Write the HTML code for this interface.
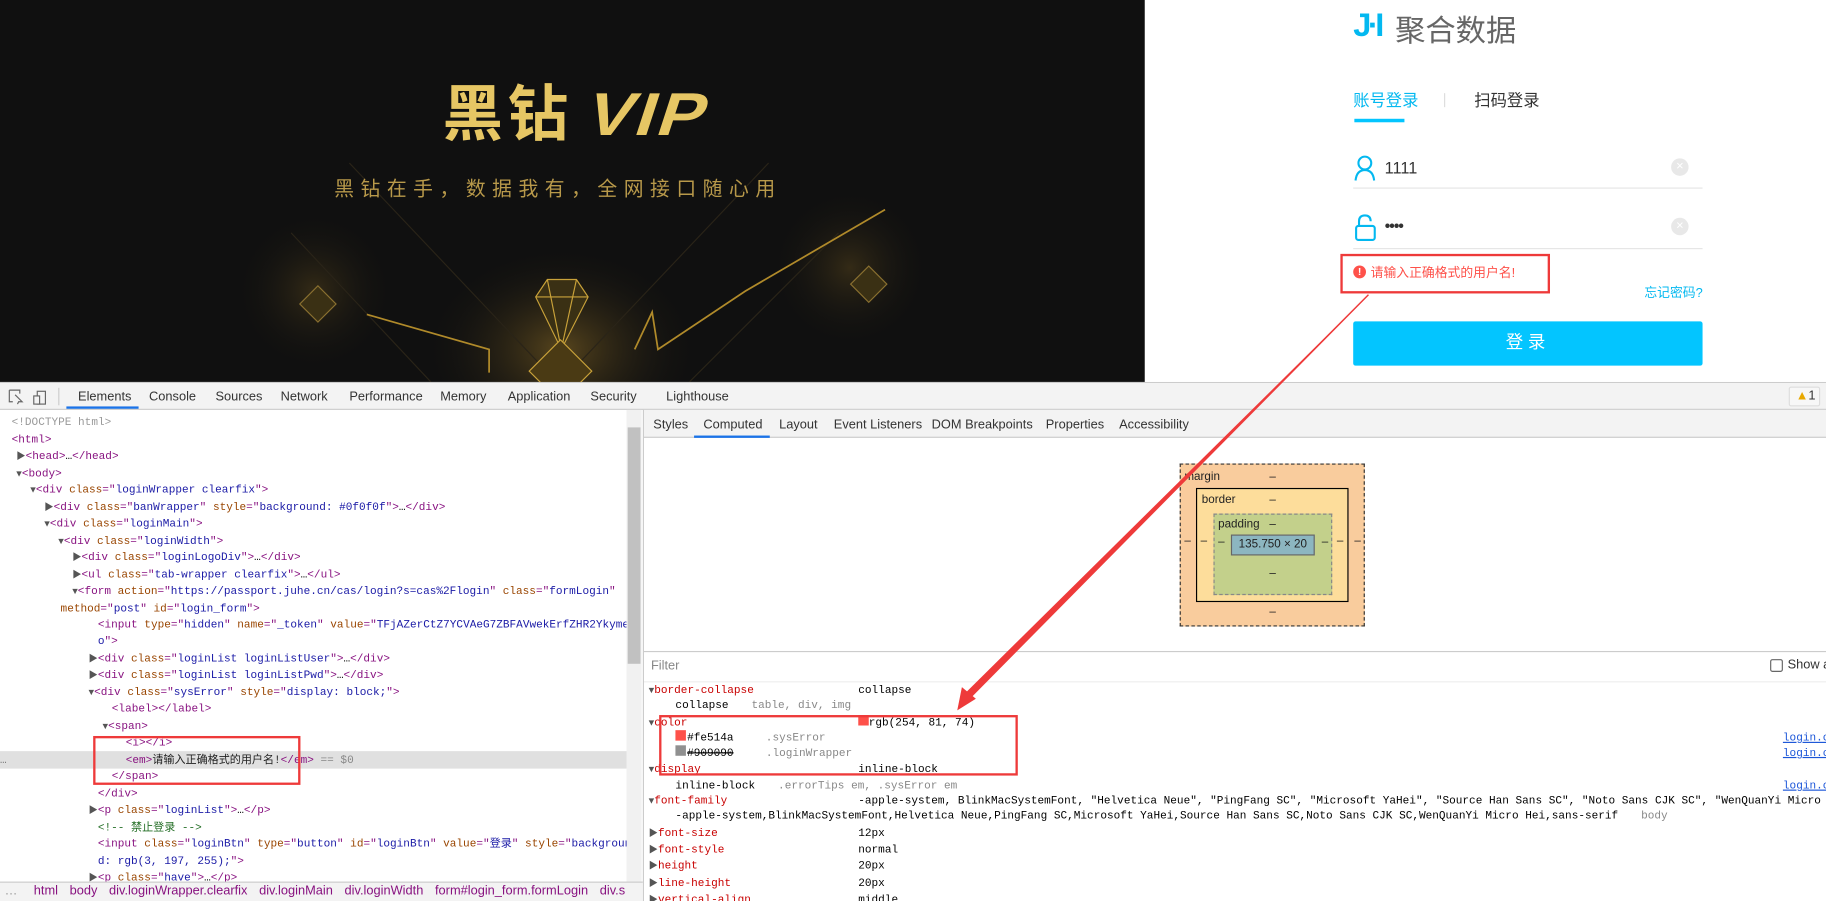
<!DOCTYPE html>
<html><head><meta charset="utf-8">
<style>
*{margin:0;padding:0;box-sizing:border-box}
html,body{width:1826px;height:901px;overflow:hidden;background:#fff}
#w{position:absolute;left:0;top:0;width:1568px;height:774px;overflow:hidden;transform:scale(1.16454);transform-origin:0 0;font-family:"Liberation Sans","Noto Sans CJK SC",sans-serif}
.a{position:absolute;white-space:nowrap}
.m{font-family:"Liberation Mono","Noto Sans CJK SC",monospace;font-size:9.5px;line-height:14px}
.t{color:#881280}.n{color:#994500}.v{color:#1a1aa6}.g{color:#999}.c{color:#236e25}
.tri{color:#555;font-size:8px}
.rp{color:#c80000}
.ui{font-size:11px;color:#333}
#el{position:absolute;left:0;top:352px;width:538px;height:405px;overflow:hidden}
#el .a{margin-top:-352px}
</style></head><body><div id="w">
<!-- banner -->
<div class="a" style="left:0;top:0;width:983px;height:328px;background:#101010;overflow:hidden">
<svg width="983" height="328" style="position:absolute;left:0;top:0">
<defs><radialGradient id="gl" cx="0.5" cy="0.5" r="0.5"><stop offset="0" stop-color="#6a5320" stop-opacity=".8"/><stop offset="1" stop-color="#101010" stop-opacity="0"/></radialGradient></defs>
<ellipse cx="482" cy="300" rx="120" ry="90" fill="url(#gl)"/>
<ellipse cx="270" cy="250" rx="70" ry="70" fill="url(#gl)" opacity=".5"/>
<ellipse cx="730" cy="230" rx="70" ry="70" fill="url(#gl)" opacity=".5"/>
<g stroke="#2a2418" fill="none"><path d="M300 140 L480 330 M660 140 L480 330 M250 200 L400 360 M720 200 L560 360"/></g>
<g stroke="#b08a2a" stroke-width="1.5" fill="none"><path d="M315 270 L420 300 L420 320 M545 300 L560 268 L565 300 L640 250 L760 180"/></g>
<g stroke="#c9a23a" fill="#3a3014" stroke-width="1"><path d="M470 240 L495 240 L505 255 L482 300 L460 255 Z"/><path d="M460 255 L505 255 M470 240 L482 300 M495 240 L482 300"/></g>
<rect x="463" y="300" width="38" height="38" transform="rotate(45 482 318)" fill="#4a3a14" stroke="#c9a23a"/>
<rect x="262" y="250" width="22" height="22" transform="rotate(45 273 261)" fill="#3a3014" stroke="#8a7030"/>
<rect x="735" y="233" width="22" height="22" transform="rotate(45 746 244)" fill="#3a3014" stroke="#8a7030"/>
</svg>
<div class="a" style="left:380px;top:64px;font-size:52px;font-weight:bold;color:#e6c664;letter-spacing:4px;font-family:'Noto Sans CJK SC',sans-serif;line-height:60px">黑钻<span style="display:inline-block;transform:skewX(-18deg) scaleX(1.15);transform-origin:0 100%;font-family:'Liberation Sans',sans-serif;margin-left:4px;letter-spacing:2px">VIP</span></div>
<div class="a" style="left:287px;top:148px;font-size:17px;color:#b8994a;letter-spacing:5.6px">黑钻在手，数据我有，全网接口随心用</div>
</div>
<!-- login -->
<div class="a" style="left:1162px;top:6px;font-size:28px;color:#03b8f0;font-weight:bold;letter-spacing:-3px">J·I</div>
<div class="a" style="left:1198px;top:6px;font-size:26px;color:#666">聚合数据</div>
<div class="a" style="left:1162px;top:76px;font-size:14px;color:#03b8f0">账号登录</div>
<div class="a" style="left:1163px;top:102px;width:43px;height:3px;background:#03c5ff"></div>
<div class="a" style="left:1240px;top:80px;width:1px;height:12px;background:#ddd"></div>
<div class="a" style="left:1266px;top:76px;font-size:14px;color:#333">扫码登录</div>
<svg class="a" style="left:1163px;top:133px" width="20" height="24"><circle cx="9" cy="7" r="5.5" fill="none" stroke="#03b8f0" stroke-width="1.8"/><path d="M1 22 Q2 13 9 13 Q16 13 17 22" fill="none" stroke="#03b8f0" stroke-width="1.8"/></svg>
<div class="a" style="left:1189px;top:136px;font-size:14px;color:#333">1111</div>
<div class="a" style="left:1435px;top:136px;width:15px;height:15px;border-radius:50%;background:#e8e8e8;color:#fff;font-size:11px;text-align:center;line-height:15px">×</div>
<div class="a" style="left:1162px;top:161px;width:300px;height:1px;background:#e5e5e5"></div>
<svg class="a" style="left:1163px;top:183px" width="20" height="26"><path d="M4 11 V7 Q4 2 9 2 Q14 2 14 7" fill="none" stroke="#03b8f0" stroke-width="1.8"/><rect x="1.5" y="11" width="16" height="12" rx="2" fill="none" stroke="#03b8f0" stroke-width="1.8"/></svg>
<div class="a" style="left:1189px;top:186px;font-size:14px;color:#333;letter-spacing:-1px">••••</div>
<div class="a" style="left:1435px;top:187px;width:15px;height:15px;border-radius:50%;background:#e8e8e8;color:#fff;font-size:11px;text-align:center;line-height:15px">×</div>
<div class="a" style="left:1162px;top:213px;width:300px;height:1px;background:#e5e5e5"></div>
<div class="a" style="left:1151px;top:218px;width:180px;height:34px;border:2px solid #ee3a3a"></div>
<div class="a" style="left:1162px;top:228px;width:11px;height:11px;border-radius:50%;background:#fe514a;color:#fff;font-size:9px;font-weight:bold;text-align:center;line-height:11px">!</div>
<div class="a" style="left:1177px;top:226px;font-size:11px;color:#fe514a">请输入正确格式的用户名!</div>
<div class="a" style="left:1412px;top:243px;font-size:11px;color:#03b8f0">忘记密码?</div>
<div class="a" style="left:1162px;top:276px;width:300px;height:38px;background:#03c5ff;border-radius:2px;color:#fff;font-size:15px;text-align:center;line-height:38px;letter-spacing:4px">登录</div>
<!-- devtools -->
<div class="a" style="left:0;top:328px;width:1568px;height:446px;background:#fff;border-top:1px solid #ccc"></div>
<div class="a" style="left:0;top:329px;width:1568px;height:23px;background:#f3f3f3;border-bottom:1px solid #ccc"></div>
<svg class="a" style="left:7px;top:334px" width="36" height="14"><path d="M1 1 H10 V4 M1 1 V11 H4" fill="none" stroke="#666"/><path d="M6 5 L12 11 L9 11 L8 13" fill="none" stroke="#666"/><rect x="25" y="2" width="7" height="11" fill="none" stroke="#666"/><rect x="22" y="6" width="5" height="7" fill="#f3f3f3" stroke="#666"/></svg>
<div class="a" style="left:50px;top:333px;width:1px;height:15px;background:#ccc"></div>
<div class="a ui" style="left:67px;top:335px">Elements</div>
<div class="a" style="left:57px;top:349px;width:62px;height:2px;background:#1a73e8"></div>
<div class="a ui" style="left:128px;top:335px">Console</div>
<div class="a ui" style="left:185px;top:335px">Sources</div>
<div class="a ui" style="left:241px;top:335px">Network</div>
<div class="a ui" style="left:300px;top:335px">Performance</div>
<div class="a ui" style="left:378px;top:335px">Memory</div>
<div class="a ui" style="left:436px;top:335px">Application</div>
<div class="a ui" style="left:507px;top:335px">Security</div>
<div class="a ui" style="left:572px;top:335px">Lighthouse</div>
<div class="a" style="left:1536px;top:332px;width:27px;height:17px;border:1px solid #ddd;border-radius:2px;background:#f7f7f7;font-size:11px;color:#333;padding-left:5px;line-height:15px"><span style="color:#e8a800">▲</span>1</div>
<!-- elements panel -->
<div class="a" style="left:552px;top:352px;width:1px;height:422px;background:#ccc"></div>
<div class="a" style="left:538px;top:352px;width:13px;height:405px;background:#f1f1f1"></div>
<div class="a" style="left:539px;top:367px;width:11px;height:203px;background:#c1c1c1"></div>
<div id="el">
<div class="a" style="left:0;top:645px;width:538px;height:15px;background:#e0e0e0"></div>
<div class="a m" style="left:0;top:646px;color:#777">…</div>
<div class="a m g" style="left:10px;top:356px">&lt;!DOCTYPE html&gt;</div>
<div class="a m t" style="left:10px;top:371px">&lt;html&gt;</div>
<div class="a m" style="left:14px;top:385px"><span class="tri">▶</span><span class="t">&lt;head&gt;</span>…<span class="t">&lt;/head&gt;</span></div>
<div class="a m" style="left:14px;top:400px"><span class="tri">▼</span><span class="t">&lt;body&gt;</span></div>
<div class="a m" style="left:26px;top:414px"><span class="tri">▼</span><span class="t">&lt;div </span><span class="n">class</span><span class="t">="</span><span class="v">loginWrapper clearfix</span><span class="t">"&gt;</span></div>
<div class="a m" style="left:38px;top:429px"><span class="tri">▶</span><span class="t">&lt;div </span><span class="n">class</span><span class="t">="</span><span class="v">banWrapper</span><span class="t">" </span><span class="n">style</span><span class="t">="</span><span class="v">background: #0f0f0f</span><span class="t">"&gt;</span>…<span class="t">&lt;/div&gt;</span></div>
<div class="a m" style="left:38px;top:443px"><span class="tri">▼</span><span class="t">&lt;div </span><span class="n">class</span><span class="t">="</span><span class="v">loginMain</span><span class="t">"&gt;</span></div>
<div class="a m" style="left:50px;top:458px"><span class="tri">▼</span><span class="t">&lt;div </span><span class="n">class</span><span class="t">="</span><span class="v">loginWidth</span><span class="t">"&gt;</span></div>
<div class="a m" style="left:62px;top:472px"><span class="tri">▶</span><span class="t">&lt;div </span><span class="n">class</span><span class="t">="</span><span class="v">loginLogoDiv</span><span class="t">"&gt;</span>…<span class="t">&lt;/div&gt;</span></div>
<div class="a m" style="left:62px;top:487px"><span class="tri">▶</span><span class="t">&lt;ul </span><span class="n">class</span><span class="t">="</span><span class="v">tab-wrapper clearfix</span><span class="t">"&gt;</span>…<span class="t">&lt;/ul&gt;</span></div>
<div class="a m" style="left:62px;top:501px"><span class="tri">▼</span><span class="t">&lt;form </span><span class="n">action</span><span class="t">="</span><span class="v">https://passport.juhe.cn/cas/login?s=cas%2Flogin</span><span class="t">" </span><span class="n">class</span><span class="t">="</span><span class="v">formLogin</span><span class="t">"</span></div>
<div class="a m" style="left:52px;top:516px"><span class="n">method</span><span class="t">="</span><span class="v">post</span><span class="t">" </span><span class="n">id</span><span class="t">="</span><span class="v">login_form</span><span class="t">"&gt;</span></div>
<div class="a m" style="left:84px;top:530px"><span class="t">&lt;input </span><span class="n">type</span><span class="t">="</span><span class="v">hidden</span><span class="t">" </span><span class="n">name</span><span class="t">="</span><span class="v">_token</span><span class="t">" </span><span class="n">value</span><span class="t">="</span><span class="v">TFjAZerCtZ7YCVAeG7ZBFAVwekErfZHR2YkymeE</span></div>
<div class="a m" style="left:84px;top:544px"><span class="v">o</span><span class="t">"&gt;</span></div>
<div class="a m" style="left:76px;top:559px"><span class="tri">▶</span><span class="t">&lt;div </span><span class="n">class</span><span class="t">="</span><span class="v">loginList loginListUser</span><span class="t">"&gt;</span>…<span class="t">&lt;/div&gt;</span></div>
<div class="a m" style="left:76px;top:573px"><span class="tri">▶</span><span class="t">&lt;div </span><span class="n">class</span><span class="t">="</span><span class="v">loginList loginListPwd</span><span class="t">"&gt;</span>…<span class="t">&lt;/div&gt;</span></div>
<div class="a m" style="left:76px;top:588px"><span class="tri">▼</span><span class="t">&lt;div </span><span class="n">class</span><span class="t">="</span><span class="v">sysError</span><span class="t">" </span><span class="n">style</span><span class="t">="</span><span class="v">display: block;</span><span class="t">"&gt;</span></div>
<div class="a m t" style="left:96px;top:602px">&lt;label&gt;&lt;/label&gt;</div>
<div class="a m" style="left:88px;top:617px"><span class="tri">▼</span><span class="t">&lt;span&gt;</span></div>
<div class="a m t" style="left:108px;top:631px">&lt;i&gt;&lt;/i&gt;</div>
<div class="a m" style="left:108px;top:646px"><span class="t">&lt;em&gt;</span><span style="color:#222">请输入正确格式的用户名!</span><span class="t">&lt;/em&gt;</span><span style="color:#888"> == $0</span></div>
<div class="a m t" style="left:96px;top:660px">&lt;/span&gt;</div>
<div class="a m t" style="left:84px;top:675px">&lt;/div&gt;</div>
<div class="a m" style="left:76px;top:689px"><span class="tri">▶</span><span class="t">&lt;p </span><span class="n">class</span><span class="t">="</span><span class="v">loginList</span><span class="t">"&gt;</span>…<span class="t">&lt;/p&gt;</span></div>
<div class="a m c" style="left:84px;top:704px">&lt;!-- 禁止登录 --&gt;</div>
<div class="a m" style="left:84px;top:718px"><span class="t">&lt;input </span><span class="n">class</span><span class="t">="</span><span class="v">loginBtn</span><span class="t">" </span><span class="n">type</span><span class="t">="</span><span class="v">button</span><span class="t">" </span><span class="n">id</span><span class="t">="</span><span class="v">loginBtn</span><span class="t">" </span><span class="n">value</span><span class="t">="</span><span class="v">登录</span><span class="t">" </span><span class="n">style</span><span class="t">="</span><span class="v">backgroun</span></div>
<div class="a m" style="left:84px;top:733px"><span class="v">d: rgb(3, 197, 255);</span><span class="t">"&gt;</span></div>
<div class="a m" style="left:76px;top:747px"><span class="tri">▶</span><span class="t">&lt;p </span><span class="n">class</span><span class="t">="</span><span class="v">have</span><span class="t">"&gt;</span>…<span class="t">&lt;/p&gt;</span></div>
</div>
<div class="a" style="left:80px;top:632px;width:178px;height:42px;border:2px solid #ee3a3a"></div>
<div class="a" style="left:0;top:757px;width:552px;height:17px;background:#f3f3f3;border-top:1px solid #ccc"></div>
<div class="a" style="left:0;top:759px;font-size:11px;color:#881280"><span style="color:#999;margin-left:4px">…</span><span style="margin-left:14px">html</span><span style="margin-left:10px">body</span><span style="margin-left:10px">div.loginWrapper.clearfix</span><span style="margin-left:10px">div.loginMain</span><span style="margin-left:10px">div.loginWidth</span><span style="margin-left:10px">form#login_form.formLogin</span><span style="margin-left:10px">div.s</span></div>
<!-- right panel -->
<div class="a" style="left:553px;top:352px;width:1015px;height:24px;background:#f3f3f3;border-bottom:1px solid #ccc"></div>
<div class="a ui" style="left:561px;top:359px">Styles</div>
<div class="a ui" style="left:604px;top:359px">Computed</div>
<div class="a" style="left:596px;top:374px;width:65px;height:2px;background:#1a73e8"></div>
<div class="a ui" style="left:669px;top:359px">Layout</div>
<div class="a ui" style="left:716px;top:359px">Event Listeners</div>
<div class="a ui" style="left:800px;top:359px">DOM Breakpoints</div>
<div class="a ui" style="left:898px;top:359px">Properties</div>
<div class="a ui" style="left:961px;top:359px">Accessibility</div>
<!-- box model -->
<div class="a" style="left:1013px;top:398px;width:159px;height:140px;background:#f9cc9d;border:1px dashed #333;font-size:10px;color:#222">
<div class="a" style="left:3px;top:5px">margin</div><div class="a" style="left:76px;top:5px">–</div>
<div class="a" style="left:3px;top:60px">–</div><div class="a" style="left:149px;top:60px">–</div><div class="a" style="left:76px;top:121px">–</div>
<div class="a" style="left:13px;top:20px;width:131px;height:98px;background:#fddd9b;border:1px solid #000">
<div class="a" style="left:4px;top:4px">border</div><div class="a" style="left:62px;top:4px">–</div>
<div class="a" style="left:3px;top:39px">–</div><div class="a" style="left:120px;top:39px">–</div><div class="a" style="left:62px;top:80px">–</div>
<div class="a" style="left:14px;top:21px;width:102px;height:70px;background:#c3d08b;border:1px dashed #888">
<div class="a" style="left:3px;top:3px">padding</div><div class="a" style="left:47px;top:3px">–</div>
<div class="a" style="left:3px;top:18px">–</div><div class="a" style="left:92px;top:18px">–</div><div class="a" style="left:47px;top:45px">–</div>
<div class="a" style="left:14px;top:17px;width:72px;height:18px;background:#8cb6c0;border:1px solid #666;text-align:center;line-height:16px">135.750 × 20</div>
</div></div></div>
<div class="a" style="left:553px;top:559px;width:1015px;height:1px;background:#ccc"></div>
<div class="a" style="left:559px;top:566px;font-size:11px;color:#888">Filter</div>
<div class="a" style="left:1520px;top:566px;width:11px;height:11px;border:1px solid #666;border-radius:2px"></div>
<div class="a" style="left:1535px;top:565px;font-size:11px;color:#333">Show a</div>
<div class="a" style="left:553px;top:585px;width:1015px;height:1px;background:#eee"></div>
<div class="a m" style="left:557px;top:586px"><span class="tri">▼</span><span class="rp">border-collapse</span></div><div class="a m" style="left:737px;top:586px">collapse</div>
<div class="a m" style="left:580px;top:599px">collapse <span style="color:#888;margin-left:14px">table, div, img</span></div>
<div class="a m" style="left:557px;top:614px"><span class="tri">▼</span><span class="rp">color</span></div><div class="a m" style="left:737px;top:614px"><span style="display:inline-block;width:9px;height:9px;background:#fe514a"></span>rgb(254, 81, 74)</div>
<div class="a m" style="left:580px;top:627px"><span style="display:inline-block;width:9px;height:9px;background:#fe514a;margin-right:1px"></span>#fe514a <span style="color:#888;margin-left:22px">.sysError</span></div>
<div class="a m" style="left:580px;top:640px"><span style="display:inline-block;width:9px;height:9px;background:#909090;margin-right:1px"></span><s>#909090</s> <span style="color:#888;margin-left:22px">.loginWrapper</span></div>
<div class="a m" style="left:557px;top:654px"><span class="tri">▼</span><span class="rp">display</span></div><div class="a m" style="left:737px;top:654px">inline-block</div>
<div class="a m" style="left:580px;top:668px">inline-block <span style="color:#888;margin-left:14px">.errorTips em, .sysError em</span></div>
<div class="a m" style="left:557px;top:681px"><span class="tri">▼</span><span class="rp">font-family</span></div><div class="a m" style="left:737px;top:681px">-apple-system, BlinkMacSystemFont, "Helvetica Neue", "PingFang SC", "Microsoft YaHei", "Source Han Sans SC", "Noto Sans CJK SC", "WenQuanYi Micro H</div>
<div class="a m" style="left:580px;top:694px">-apple-system,BlinkMacSystemFont,Helvetica Neue,PingFang SC,Microsoft YaHei,Source Han Sans SC,Noto Sans CJK SC,WenQuanYi Micro Hei,sans-serif <span style="color:#888;margin-left:14px">body</span></div>
<div class="a m" style="left:557px;top:709px"><span class="tri">▶</span><span class="rp">font-size</span></div><div class="a m" style="left:737px;top:709px">12px</div>
<div class="a m" style="left:557px;top:723px"><span class="tri">▶</span><span class="rp">font-style</span></div><div class="a m" style="left:737px;top:723px">normal</div>
<div class="a m" style="left:557px;top:737px"><span class="tri">▶</span><span class="rp">height</span></div><div class="a m" style="left:737px;top:737px">20px</div>
<div class="a m" style="left:557px;top:752px"><span class="tri">▶</span><span class="rp">line-height</span></div><div class="a m" style="left:737px;top:752px">20px</div>
<div class="a m" style="left:557px;top:766px"><span class="tri">▶</span><span class="rp">vertical-align</span></div><div class="a m" style="left:737px;top:766px">middle</div>
<div class="a m" style="left:1531px;top:627px;color:#1a55d8;text-decoration:underline">login.c</div>
<div class="a m" style="left:1531px;top:640px;color:#1a55d8;text-decoration:underline">login.c</div>
<div class="a m" style="left:1531px;top:668px;color:#1a55d8;text-decoration:underline">login.c</div>
<div class="a" style="left:566px;top:614px;width:308px;height:52px;border:2px solid #ee3a3a"></div>
<!-- arrow -->
<svg class="a" style="left:0;top:0" width="1568" height="774">
<path d="M1175 253 L832 598" stroke="#ee3a3a" stroke-width="1" fill="none"/>
<path d="M1175 253 L1175.5 253.5 L833 600 L828 596 Z" fill="#ee3a3a"/>
<path d="M822 610 L826 590 L838 600 Z" fill="#ee3a3a"/>
</svg>
</div></body></html>
